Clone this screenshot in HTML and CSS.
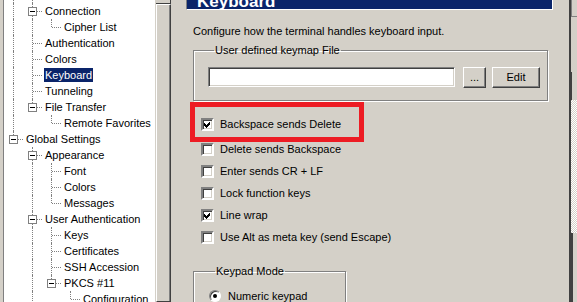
FILE: index.html
```html
<!DOCTYPE html>
<html lang="en">

<head>
    <meta charset="UTF-8">
    <title>Global Options - Keyboard</title>
    <link rel="stylesheet" href="styles.css">
</head>

<body>
    <div class="window">
        <div class="tree">
            <div class="row top"><span class="g v"></span><span class="g v"></span></div>
            <div class="row"><span class="g v"></span><span class="g t"><span class="box"></span></span><span class="label">Connection</span></div>
            <div class="row"><span class="g v"></span><span class="g v"></span><span class="g l"></span><span class="label">Cipher List</span></div>
            <div class="row"><span class="g v"></span><span class="g t"></span><span class="label">Authentication</span></div>
            <div class="row"><span class="g v"></span><span class="g t"></span><span class="label">Colors</span></div>
            <div class="row"><span class="g v"></span><span class="g t"></span><span class="label selected">Keyboard</span></div>
            <div class="row"><span class="g v"></span><span class="g t"></span><span class="label">Tunneling</span></div>
            <div class="row"><span class="g v"></span><span class="g l"><span class="box"></span></span><span class="label">File Transfer</span></div>
            <div class="row"><span class="g v"></span><span class="g"></span><span class="g l"></span><span class="label">Remote Favorites</span></div>
            <div class="row"><span class="g l"><span class="box"></span></span><span class="label">Global Settings</span></div>
            <div class="row"><span class="g"></span><span class="g t"><span class="box"></span></span><span class="label">Appearance</span></div>
            <div class="row"><span class="g"></span><span class="g v"></span><span class="g t"></span><span class="label">Font</span></div>
            <div class="row"><span class="g"></span><span class="g v"></span><span class="g t"></span><span class="label">Colors</span></div>
            <div class="row"><span class="g"></span><span class="g v"></span><span class="g l"></span><span class="label">Messages</span></div>
            <div class="row"><span class="g"></span><span class="g t"><span class="box"></span></span><span class="label">User Authentication</span></div>
            <div class="row"><span class="g"></span><span class="g v"></span><span class="g t"></span><span class="label">Keys</span></div>
            <div class="row"><span class="g"></span><span class="g v"></span><span class="g t"></span><span class="label">Certificates</span></div>
            <div class="row"><span class="g"></span><span class="g v"></span><span class="g t"></span><span class="label">SSH Accession</span></div>
            <div class="row"><span class="g"></span><span class="g v"></span><span class="g l"><span class="box"></span></span><span class="label">PKCS #11</span></div>
            <div class="row"><span class="g"></span><span class="g v"></span><span class="g"></span><span class="g l"></span><span class="label">Configuration</span></div>
        </div>

        <div class="vscroll">
            <div class="thumb-end"></div>
            <div class="thumb"></div>
        </div>

        <div class="panel">
            <div class="header">Keyboard</div>
            <div class="desc">Configure how the terminal handles keyboard input.</div>

            <fieldset class="group keymap">
                <legend>User defined keymap File</legend>
                <div class="file-row">
                    <div class="textbox"></div>
                    <div class="button browse">...</div>
                    <div class="button edit">Edit</div>
                </div>
            </fieldset>

            <div class="options">
                <div class="option first"><span class="check on"><svg width="9" height="9" viewBox="0 0 9 9"><path d="M1 3 L3 5 L7 1 L7 4 L3 8 L1 6 Z" fill="#000" shape-rendering="crispEdges"/></svg></span>Backspace sends Delete</div>
                <div class="option"><span class="check"></span>Delete sends Backspace</div>
                <div class="option"><span class="check"></span>Enter sends CR + LF</div>
                <div class="option"><span class="check"></span>Lock function keys</div>
                <div class="option"><span class="check on"><svg width="9" height="9" viewBox="0 0 9 9"><path d="M1 3 L3 5 L7 1 L7 4 L3 8 L1 6 Z" fill="#000" shape-rendering="crispEdges"/></svg></span>Line wrap</div>
                <div class="option"><span class="check"></span>Use Alt as meta key (send Escape)</div>
            </div>

            <fieldset class="group keypad">
                <legend>Keypad Mode</legend>
                <div class="option"><span class="radio on"></span>Numeric keypad</div>
            </fieldset>

            <div class="highlight"></div>
        </div>

        <div class="outer-scroll">
            <div class="piece-a"></div>
            <div class="piece-gap"></div>
            <div class="piece-b"></div>
            <div class="track"></div>
            <div class="piece-c"></div>
        </div>
    </div>
</body>

</html>
```

FILE: styles.css
```css
body {
    margin: 0px;
    font-family: "Liberation Sans", Arial, sans-serif;
    font-size: 11px;
    color: #000;
}

.window {
    display: flex;
    width: 577px;
    height: 302px;
    overflow: hidden;
    background-color: #d4d0c8;
}

/* tree */

.tree {
    flex: none;
    width: 151px;
    margin-left: 3px;
    border-left: 1px solid #808080;
    background-color: #fff;
    overflow: hidden;
}

.tree .row {
    display: flex;
    align-items: center;
    height: 16px;
    white-space: nowrap;
}

.tree .row.top {
    height: 3px;
}

.tree .g {
    position: relative;
    flex: none;
    width: 19px;
    height: 100%;
}

.tree .g.v::before,
.tree .g.t::before,
.tree .g.l::before {
    content: "";
    position: absolute;
    left: 9px;
    top: 0px;
    bottom: 0px;
    border-left: 1px dotted #808080;
}

.tree .g.l::before {
    bottom: 8px;
}

.tree .g.t::after,
.tree .g.l::after {
    content: "";
    position: absolute;
    left: 10px;
    right: 0px;
    top: 8px;
    border-top: 1px dotted #808080;
}

.tree .box {
    position: absolute;
    z-index: 1;
    left: 5px;
    top: 4px;
    width: 7px;
    height: 7px;
    border: 1px solid #808080;
    background-color: #fff;
}

.tree .box::before {
    content: "";
    position: absolute;
    left: 1px;
    top: 3px;
    width: 5px;
    height: 1px;
    background-color: #000;
}

.tree .label {
    margin-left: 2px;
    padding: 0px 1px;
    line-height: 14px;
}

.tree .label.selected {
    background-color: #0a246a;
    color: #fff;
}

/* tree scrollbar */

.vscroll {
    display: flex;
    flex-direction: column;
    flex: none;
    width: 15px;
    padding-left: 1px;
}

.thumb-end {
    height: 3px;
    border-bottom: 1px solid #404040;
    border-right: 1px solid #404040;
}

.thumb {
    flex: 1;
    border: 1px solid;
    border-color: #fff #404040 #404040 #fff;
    box-shadow: inset -1px 0px 0px #808080;
}

/* settings panel */

.panel {
    position: relative;
    flex: 1;
    padding: 0px 16px 0px 15px;
}

.header {
    height: 28px;
    margin-top: -20px;
    padding: 0px 10px;
    border: 1px solid;
    border-color: #808080 #fff #fff #808080;
    background-color: #0a246a;
    color: #fff;
    font-size: 17px;
    font-weight: bold;
    line-height: 41px;
    overflow: hidden;
}

.desc {
    margin: 15px 0px 0px 7px;
    line-height: 13px;
}

.group {
    margin: 6px 5px 0px 7px;
    padding: 0px;
    border: 1px solid #808080;
    box-shadow: 1px 1px 0px #fff, inset 1px 1px 0px #fff;
}

.group legend {
    margin-left: 6px;
    padding: 0px 1px;
    line-height: 13px;
}

.keymap {
    padding: 10px 7px 12px 14px;
}

.file-row {
    display: flex;
    align-items: flex-start;
}

.textbox {
    width: 243px;
    height: 16px;
    border: 1px solid;
    border-color: #808080 #fff #fff #808080;
    box-shadow: inset 1px 1px 0px #404040, inset -1px -1px 0px #d4d0c8;
    padding: 1px;
    background-color: #fff;
}

.button {
    height: 19px;
    margin-left: 8px;
    border: 1px solid;
    border-color: #fff #404040 #404040 #fff;
    box-shadow: inset -1px -1px 0px #808080;
    text-align: center;
    line-height: 19px;
}

.browse {
    width: 21px;
}

.edit {
    width: 46px;
    margin-left: 6px;
}

.options {
    margin: 11px 0px 0px 15px;
}

.option {
    display: flex;
    align-items: center;
    height: 22px;
}

.option.first {
    height: 24px;
    margin-bottom: 2px;
}

.check {
    display: flex;
    align-items: center;
    justify-content: center;
    flex: none;
    width: 9px;
    height: 9px;
    margin-right: 6px;
    border: 2px solid;
    border-color: #808080 #fff #fff #808080;
    box-shadow: inset 1px 1px 0px #404040, inset -1px -1px 0px #d4d0c8;
    background-color: #fff;
}

.check svg {
    display: block;
}

.keypad {
    width: 136px;
    margin-top: 17px;
    padding: 7px 0px 10px 15px;
}

.radio {
    position: relative;
    flex: none;
    width: 10px;
    height: 10px;
    margin-right: 7px;
    border: 1px solid;
    border-color: #808080 #fff #fff #808080;
    border-radius: 50%;
    box-shadow: inset 1px 1px 0px #404040;
    background-color: #fff;
}

.radio.on::after {
    content: "";
    position: absolute;
    left: 3px;
    top: 3px;
    width: 4px;
    height: 4px;
    border-radius: 50%;
    background-color: #000;
}

/* red annotation box */
.highlight {
    position: absolute;
    left: 19px;
    top: 102px;
    width: 164px;
    height: 30px;
    border: 5px solid #ed1c24;
}

/* right edge scrollbar */

.outer-scroll {
    display: flex;
    flex-direction: column;
    flex: none;
    width: 6px;
    border-left: 2px solid #404040;
}

.piece-a {
    height: 16px;
    border-left: 1px solid #808080;
    border-bottom: 1px solid #808080;
}

.piece-gap {
    height: 55px;
}

.piece-b {
    height: 28px;
    border-left: 1px solid #404040;
}

.track {
    height: 133px;
    background-image: repeating-conic-gradient(#fff 0% 25%, #d4d0c8 0% 50%);
    background-size: 2px 2px;
}

.piece-c {
    flex: 1;
    border-left: 2px solid #404040;
}
```
